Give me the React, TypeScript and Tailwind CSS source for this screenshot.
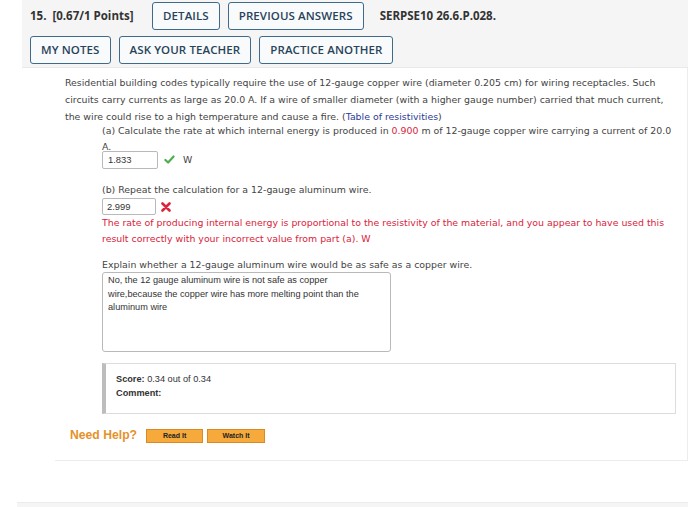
import React from "react";

const btn =
  "h-[28px] px-[10px] flex items-center border-[1.5px] border-[#3f6a89] rounded-[3px] bg-[#f8fafb] text-[#28435a] text-[11.5px] font-semibold tracking-[0.1px]";

function Check() {
  return (
    <svg width="11" height="9" viewBox="0 0 13 11">
      <path d="M1.5 6 L4.8 9.2 L11.5 1.8" fill="none" stroke="#4cae4c" strokeWidth="2.6" strokeLinecap="round" strokeLinejoin="round" />
    </svg>
  );
}

function Cross() {
  return (
    <svg width="10" height="10" viewBox="0 0 10 10">
      <path d="M1.5 1.5 L8.5 8.5 M8.5 1.5 L1.5 8.5" stroke="#d9253d" strokeWidth="2.6" strokeLinecap="round" />
    </svg>
  );
}

export default function App() {
  return (
    <div className="w-[700px] h-[507px] bg-white overflow-hidden relative">
      {/* header */}
      <div
        className="ml-[22px] w-[666px] h-[68px] bg-[#f5f5f5] border-b border-[#e9e9e9] flex flex-col gap-[6px] pt-[2px] pl-[8px]"
        style={{ fontFamily: "'Open Sans', sans-serif" }}
      >
        <div className="flex items-center">
          <span className="text-[11.5px] font-bold text-[#333] w-[122px]">15.&nbsp; [0.67/1 Points]</span>
          <div className="flex gap-[8px]">
            <div className={btn}>DETAILS</div>
            <div className={btn}>PREVIOUS ANSWERS</div>
          </div>
          <span className="ml-[16px] text-[11.5px] font-bold text-[#333]">SERPSE10 26.6.P.028.</span>
        </div>
        <div className="flex gap-[8px]">
          <div className={btn}>MY NOTES</div>
          <div className={btn}>ASK YOUR TEACHER</div>
          <div className={btn}>PRACTICE ANOTHER</div>
        </div>
      </div>

      {/* content panel */}
      <div
        className="ml-[55px] w-[633px] h-[393px] border-r border-b border-[#ececec] pl-[10px] pt-[6px] text-[#444] text-[9.4px] leading-[17px]"
        style={{ fontFamily: "'DejaVu Sans', Verdana, sans-serif" }}
      >
        <p className="pr-[20px]">
          Residential building codes typically require the use of 12-gauge copper wire (diameter 0.205 cm) for wiring receptacles. Such
          circuits carry currents as large as 20.0 A. If a wire of smaller diameter (with a higher gauge number) carried that much current,
          the wire could rise to a high temperature and cause a fire. (<span className="text-[#2c3a97]">Table of resistivities</span>)
        </p>
        <div className="pl-[37px] pr-[10px]">
          <p className="mt-[-2px] leading-[16px]">
            (a) Calculate the rate at which internal energy is produced in <span className="text-[#d8233b]">0.900</span> m of 12-gauge copper wire carrying a current of 20.0 A.
          </p>
          <div className="flex items-center h-[19px] mt-[-5px]">
            <div
              className="w-[56px] h-[18px] border border-[#b9b9b9] rounded-[2px] flex items-center pl-[5px] text-[9.4px] text-[#333]"
              style={{ fontFamily: "'Liberation Sans', Arial, sans-serif" }}
            >
              1.833
            </div>
            <span className="ml-[6px] flex"><Check /></span>
            <span className="ml-[8px]">W</span>
          </div>

          <p className="mt-[12px]">(b) Repeat the calculation for a 12-gauge aluminum wire.</p>
          <div className="flex items-center h-[17px]">
            <div
              className="w-[54px] h-[17px] border border-[#b9b9b9] rounded-[2px] flex items-center pl-[4px] text-[9.4px] text-[#333]"
              style={{ fontFamily: "'Liberation Sans', Arial, sans-serif" }}
            >
              2.999
            </div>
            <span className="ml-[5px] flex"><Cross /></span>
          </div>
          <p className="text-[#d8233b] leading-[16px]">
            The rate of producing internal energy is proportional to the resistivity of the material, and you appear to have used this result correctly with your incorrect value from part (a). W
          </p>

          <p className="mt-[9px]">Explain whether a 12-gauge aluminum wire would be as safe as a copper wire.</p>
          <div
            className="w-[289px] h-[80px] mt-[-1px] border border-[#b9b9b9] rounded-[3px] px-[5px] pt-[1px] text-[9.2px] leading-[13.5px] text-[#333]"
            style={{ fontFamily: "'Liberation Sans', Arial, sans-serif" }}
          >
            No, the 12 gauge aluminum wire is not safe as copper
            <br />
            wire,because the copper wire has more melting point than the
            <br />
            aluminum wire
          </div>

          <div
            className="mt-[11px] h-[51px] w-[574px] border border-[#dcdcdc] border-l-[4px] border-l-[#bdbdbd] pl-[10px] pt-[8px] text-[9.2px] leading-[14px] text-[#333]"
            style={{ fontFamily: "'Liberation Sans', Arial, sans-serif" }}
          >
            <div><span className="font-bold">Score:</span> 0.34 out of 0.34</div>
            <div className="font-bold">Comment:</div>
          </div>
        </div>

        <div
          className="flex items-center mt-[13px] ml-[5px]"
          style={{ fontFamily: "'Liberation Sans', Arial, sans-serif" }}
        >
          <span className="text-[#e5912a] font-bold text-[12.2px]">Need Help?</span>
          <div className="ml-[9px] w-[57px] h-[14px] bg-[#f7aa3c] border border-[#d98a26] flex items-center justify-center text-[7px] font-bold text-[#222]">
            Read It
          </div>
          <div className="ml-[4px] w-[58px] h-[14px] bg-[#f7aa3c] border border-[#d98a26] flex items-center justify-center text-[7px] font-bold text-[#222]">
            Watch It
          </div>
        </div>
      </div>

      {/* next question bar */}
      <div className="ml-[17px] mt-[41px] w-[671px] h-[20px] bg-[#f5f5f5] border-t border-[#ececec]" />
    </div>
  );
}
